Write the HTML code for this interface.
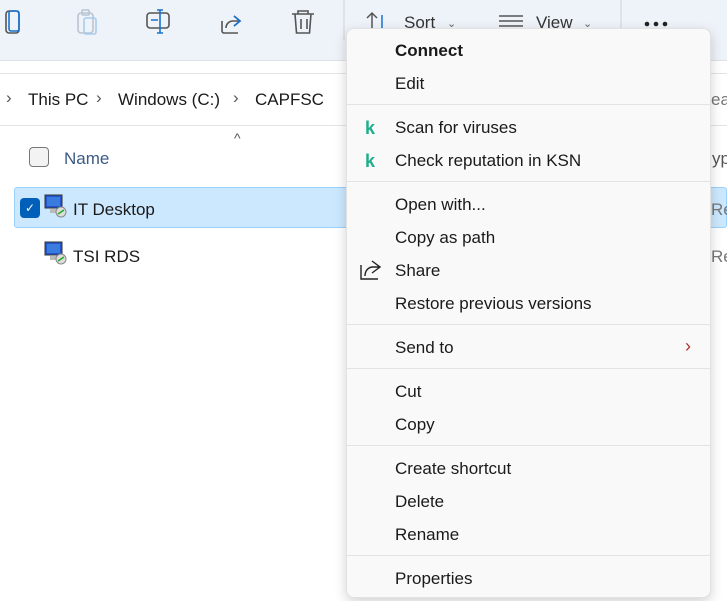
<!DOCTYPE html>
<html><head><meta charset="utf-8"><style>
*{margin:0;padding:0;box-sizing:border-box}
body{width:727px;height:601px;overflow:hidden;background:#fff;font-family:"Liberation Sans",sans-serif;color:#1a1a1a;position:relative}
.abs{position:absolute}
.tb{left:0;top:0;width:727px;height:61px;background:#eef3f9;border-bottom:1px solid #dde2e8}
.t{position:absolute;font-size:17px;white-space:nowrap}
.ch{position:absolute;font-size:17px;color:#555;top:88px}
.menu{left:346px;top:28px;width:365px;height:570px;background:#f9f9f9;border:1px solid #e2e2e2;border-radius:8px;box-shadow:0 4px 12px rgba(0,0,0,.18)}
.mi{position:absolute;left:48px;font-size:17px;color:#1a1a1a;white-space:nowrap;line-height:20px}
.sep{position:absolute;left:0;width:363px;height:1px;background:#e3e3e3}
.k{position:absolute;left:18px;font-weight:bold;color:#1fae8a;font-size:18px;line-height:20px}
</style></head><body>
<div class="abs tb"></div>
<div class="abs" style="left:343px;top:0;width:2px;height:40px;background:#dfe3e8"></div>
<div class="abs" style="left:620px;top:0;width:2px;height:40px;background:#dfe3e8"></div>
<svg class="abs" style="left:0;top:8px" width="330" height="30" viewBox="0 0 330 30" fill="none" stroke-width="1.6">
<rect x="6" y="3" width="13" height="22" rx="3" stroke="#555"/><rect x="9" y="3" width="10" height="20" rx="2" stroke="#1a73d0"/>
<rect x="78" y="5" width="15" height="20" rx="3" stroke="#b9c4d0"/><rect x="82" y="2" width="7" height="5" rx="1" stroke="#b9c4d0"/><rect x="84" y="10" width="12" height="16" rx="2" stroke="#a9cbec"/>
<rect x="147" y="5" width="22" height="15" rx="3" stroke="#555"/><path d="M160 2v23M157 2h6M157 25h6M151 12h7" stroke="#1a73d0"/>
<path d="M222 13v10a2 2 0 002 2h14M234 8l6 5-6 5M240 13h-7c-4 0-7 3-7 7" stroke="#555"/><path d="M234 8l6 5-6 5" stroke="#1a73d0"/>
<path d="M292 6h22M298 6V3h10v3M295 6l1.5 19h13L311 6M301 11v10M307 11v10" stroke="#555"/>
</svg>
<svg class="abs" style="left:365px;top:10px" width="26" height="25" fill="none" stroke-width="1.5"><path d="M7 22V3M2 8l5-5 5 5" stroke="#555"/><path d="M17 5v18M13 19l4 4 4-4" stroke="#1a73d0"/></svg>
<div class="t" style="left:404px;top:13px;color:#333">Sort</div>
<div class="t" style="left:447px;top:17px;font-size:11px;color:#666">⌄</div>
<svg class="abs" style="left:498px;top:14px" width="26" height="14"><path d="M1 2h24M1 7h24M1 12h24" stroke="#555" stroke-width="1.4"/></svg>
<div class="t" style="left:536px;top:13px;color:#333">View</div>
<div class="t" style="left:583px;top:17px;font-size:11px;color:#666">⌄</div>
<svg class="abs" style="left:643px;top:20px" width="28" height="8"><circle cx="4" cy="4" r="2.3" fill="#222"/><circle cx="13" cy="4" r="2.3" fill="#222"/><circle cx="22" cy="4" r="2.3" fill="#222"/></svg>
<div class="abs" style="left:0;top:73px;width:727px;height:1px;background:#e4e4e4"></div>
<div class="abs" style="left:0;top:125px;width:727px;height:1px;background:#e4e4e4"></div>
<div class="ch" style="left:6px">›</div>
<div class="t" style="left:28px;top:90px">This PC</div>
<div class="ch" style="left:96px">›</div>
<div class="t" style="left:118px;top:90px">Windows (C:)</div>
<div class="ch" style="left:233px">›</div>
<div class="t" style="left:255px;top:90px">CAPFSC</div>
<div class="t" style="left:711px;top:90px;color:#777">ea</div>
<div class="t" style="left:234px;top:130px;font-size:14px;color:#555">^</div>
<div class="abs" style="left:29px;top:147px;width:20px;height:20px;border:1px solid #777;border-radius:4px;background:#f3f3f3"></div>
<div class="t" style="left:64px;top:149px;color:#3b5a85">Name</div>
<div class="t" style="left:712px;top:149px;color:#555">yp</div>
<div class="abs" style="left:14px;top:187px;width:713px;height:41px;background:#cce8ff;border:1px solid #99d1ff;border-radius:3px"></div>
<div class="abs" style="left:20px;top:198px;width:20px;height:20px;background:#005fb8;border-radius:4px;color:#fff;font-size:12px;text-align:center;line-height:20px">✓</div>
<svg class="abs" style="left:44px;top:194px" width="24" height="24"><rect x="1" y="1" width="17" height="13" fill="#2255cc" stroke="#333"/><rect x="3" y="3" width="13" height="9" fill="#3a7be0"/><rect x="6" y="15" width="8" height="4" fill="#bbb"/><circle cx="17" cy="18" r="5" fill="#ddd" stroke="#888"/><path d="M14 20l6-4" stroke="#2a2" stroke-width="1.5"/></svg>
<div class="t" style="left:73px;top:200px">IT Desktop</div>
<div class="t" style="left:711px;top:200px;color:#777">Rer</div>
<svg class="abs" style="left:44px;top:241px" width="24" height="24"><rect x="1" y="1" width="17" height="13" fill="#2255cc" stroke="#333"/><rect x="3" y="3" width="13" height="9" fill="#3a7be0"/><rect x="6" y="15" width="8" height="4" fill="#bbb"/><circle cx="17" cy="18" r="5" fill="#ddd" stroke="#888"/><path d="M14 20l6-4" stroke="#2a2" stroke-width="1.5"/></svg>
<div class="t" style="left:73px;top:247px">TSI RDS</div>
<div class="t" style="left:711px;top:247px;color:#777">Rer</div>
<div class="abs menu">
<div class="mi" style="top:12px;font-weight:bold">Connect</div>
<div class="mi" style="top:45px">Edit</div>
<div class="sep" style="top:75px"></div>
<div class="k" style="top:89px">k</div><div class="mi" style="top:89px">Scan for viruses</div>
<div class="k" style="top:122px">k</div><div class="mi" style="top:122px">Check reputation in KSN</div>
<div class="sep" style="top:152px"></div>
<div class="mi" style="top:166px">Open with...</div>
<div class="mi" style="top:199px">Copy as path</div>
<svg class="abs" style="left:12px;top:230px" width="26" height="22" fill="none" stroke="#222" stroke-width="1.4"><path d="M2 6v14h17M13 2l8 6-8 6M21 8h-7c-5 0-8 4-8 9"/></svg>
<div class="mi" style="top:232px">Share</div>
<div class="mi" style="top:265px">Restore previous versions</div>
<div class="sep" style="top:295px"></div>
<div class="mi" style="top:309px">Send to</div>
<div class="abs" style="left:338px;top:307px;font-size:18px;color:#a33">›</div>
<div class="sep" style="top:339px"></div>
<div class="mi" style="top:353px">Cut</div>
<div class="mi" style="top:386px">Copy</div>
<div class="sep" style="top:416px"></div>
<div class="mi" style="top:430px">Create shortcut</div>
<div class="mi" style="top:463px">Delete</div>
<div class="mi" style="top:496px">Rename</div>
<div class="sep" style="top:526px"></div>
<div class="mi" style="top:540px">Properties</div>
</div>
</body></html>
